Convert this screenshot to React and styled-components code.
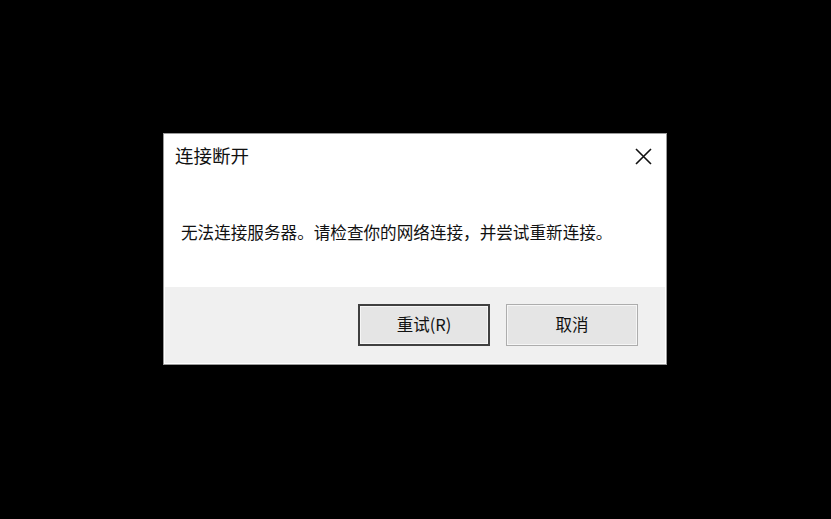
import React from "react";
import styled, { createGlobalStyle } from "styled-components";

const Global = createGlobalStyle`
  html, body { margin: 0; padding: 0; background: #000; }
  body { width: 831px; height: 519px; overflow: hidden; font-family: "Noto Sans CJK SC", "Noto Sans", sans-serif; }
`;

const Screen = styled.div`
  width: 831px;
  height: 519px;
  box-sizing: border-box;
  padding: 133px 0 0 163px;
  background: #000;
`;

const Dialog = styled.div`
  width: 504px;
  height: 232px;
  box-sizing: border-box;
  background: #fff;
  border: 1px solid #9a9a9a;
  padding: 1px;
  display: flex;
  flex-direction: column;
`;

const Body = styled.div`
  height: 152px;
  display: flex;
  flex-direction: column;
  background: #fff;
`;

const TitleBar = styled.div`
  display: flex;
  align-items: center;
  justify-content: space-between;
  height: 42px;
  padding: 0 12px 0 10px;
`;

const Title = styled.div`
  font-size: 18.5px;
  color: #111;
  margin-top: -3px;
`;

const CloseBtn = styled.div`
  width: 20px;
  height: 20px;
  display: flex;
  align-items: center;
  justify-content: center;
`;

const Message = styled.div`
  margin-top: 43px;
  padding-left: 16px;
  font-size: 16.6px;
  color: #111;
  white-space: nowrap;
`;

const Footer = styled.div`
  flex: 1;
  background: #f0f0f0;
  display: flex;
  justify-content: flex-end;
  align-items: flex-start;
  padding: 17px 27px 0 0;
  gap: 16px;
`;

const Button = styled.button`
  width: 132px;
  height: 42px;
  box-sizing: border-box;
  background: #e5e5e5;
  border: ${p => (p.$primary ? "2px solid #404040" : "1px solid #adadad")};
  box-shadow: inset 0 0 0 1px #f6f6f6;
  font-family: "Noto Sans CJK SC", "Noto Sans", sans-serif;
  font-size: 16.5px;
  color: #111;
  padding: 0 0 2px 0;
  display: flex;
  align-items: center;
  justify-content: center;
`;

export default function App() {
  return (
    <>
      <Global />
      <Screen>
        <Dialog>
          <Body>
            <TitleBar>
              <Title>连接断开</Title>
              <CloseBtn>
                <svg width="17" height="17" viewBox="0 0 17 17">
                  <path d="M1 1 L16 16 M16 1 L1 16" stroke="#111" strokeWidth="1.6" fill="none" />
                </svg>
              </CloseBtn>
            </TitleBar>
            <Message>无法连接服务器。请检查你的网络连接，并尝试重新连接。</Message>
          </Body>
          <Footer>
            <Button $primary>重试(R)</Button>
            <Button>取消</Button>
          </Footer>
        </Dialog>
      </Screen>
    </>
  );
}
